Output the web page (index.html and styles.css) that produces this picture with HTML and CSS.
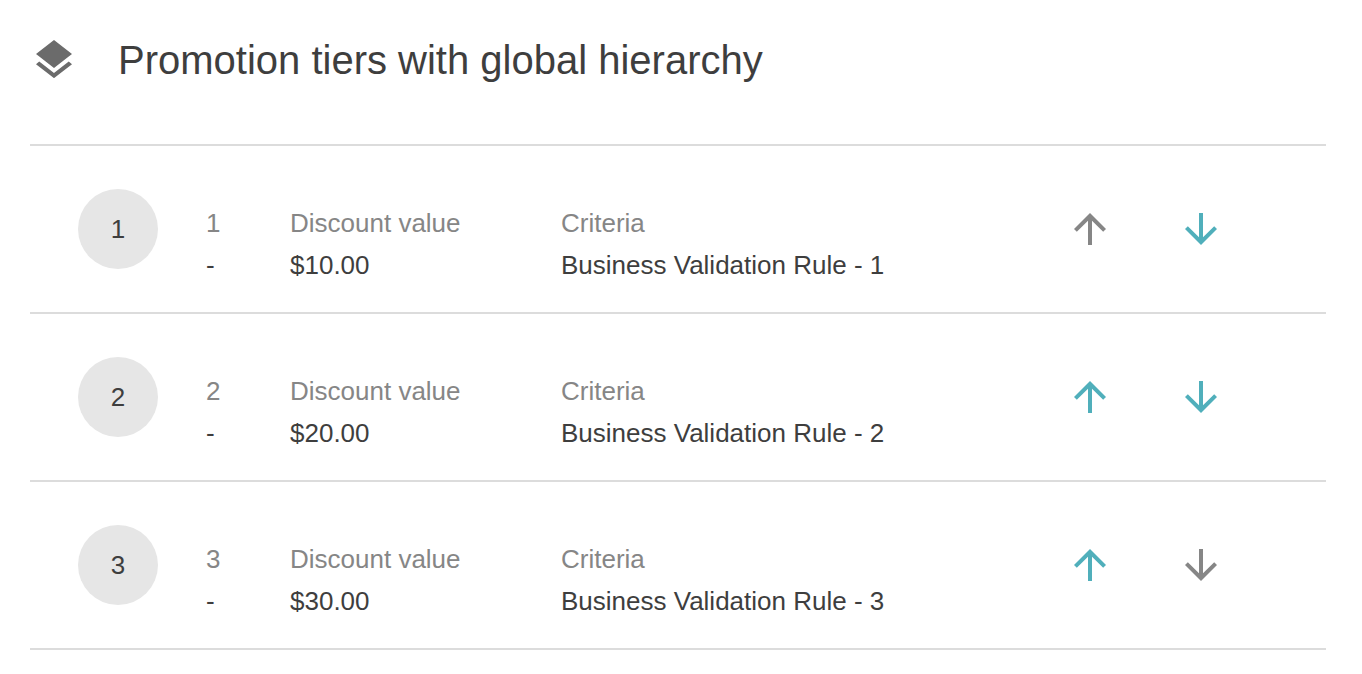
FILE: index.html
```html
<!DOCTYPE html>
<html lang="en">
<head>
    <meta charset="UTF-8">
    <meta name="viewport" content="width=device-width, initial-scale=1.0">
    <title>Promotion tiers</title>
    <link rel="stylesheet" href="styles.css">
</head>
<body>
    <svg class="icon-defs" aria-hidden="true">
        <symbol id="arrow-up" viewBox="4 4 16 16">
            <path d="M4 12l1.41 1.41L11 7.83V20h2V7.83l5.58 5.59L20 12l-8-8-8 8z"/>
        </symbol>
        <symbol id="arrow-down" viewBox="4 4 16 16">
            <path d="M20 12l-1.41-1.41L13 16.17V4h-2v12.17l-5.58-5.59L4 12l8 8 8-8z"/>
        </symbol>
    </svg>

    <main class="tiers">
        <header class="tiers-header">
            <svg class="layers-icon" viewBox="3 2 18 19" aria-hidden="true">
                <path d="M11.99 18.54l-7.37-5.73L3 14.07l9 7 9-7-1.63-1.27-7.38 5.74zM12 16l7.36-5.73L21 9l-9-7-9 7 1.63 1.27L12 16z"/>
            </svg>
            <h1>Promotion tiers with global hierarchy</h1>
        </header>

        <ul class="tier-list">
            <li class="tier">
                <div class="badge">1</div>
                <div class="field"><span class="label">1</span><span>-</span></div>
                <div class="field"><span class="label">Discount value</span><span>$10.00</span></div>
                <div class="field"><span class="label">Criteria</span><span>Business Validation Rule - 1</span></div>
                <div class="actions">
                    <button type="button" aria-label="Move up" disabled><svg><use href="#arrow-up"/></svg></button>
                    <button type="button" aria-label="Move down"><svg><use href="#arrow-down"/></svg></button>
                </div>
            </li>
            <li class="tier">
                <div class="badge">2</div>
                <div class="field"><span class="label">2</span><span>-</span></div>
                <div class="field"><span class="label">Discount value</span><span>$20.00</span></div>
                <div class="field"><span class="label">Criteria</span><span>Business Validation Rule - 2</span></div>
                <div class="actions">
                    <button type="button" aria-label="Move up"><svg><use href="#arrow-up"/></svg></button>
                    <button type="button" aria-label="Move down"><svg><use href="#arrow-down"/></svg></button>
                </div>
            </li>
            <li class="tier">
                <div class="badge">3</div>
                <div class="field"><span class="label">3</span><span>-</span></div>
                <div class="field"><span class="label">Discount value</span><span>$30.00</span></div>
                <div class="field"><span class="label">Criteria</span><span>Business Validation Rule - 3</span></div>
                <div class="actions">
                    <button type="button" aria-label="Move up"><svg><use href="#arrow-up"/></svg></button>
                    <button type="button" aria-label="Move down" disabled><svg><use href="#arrow-down"/></svg></button>
                </div>
            </li>
        </ul>
    </main>
</body>
</html>
```
FILE: styles.css
```css
* {
    box-sizing: border-box;
}

body {
    margin: 0;
    background: #ffffff;
    color: #3e3e3e;
    font-family: "Helvetica Neue", "Liberation Sans", Arial, sans-serif;
    font-size: 26px;
    line-height: 42px;
}

.icon-defs {
    display: none;
}

.tiers {
    padding: 0 36px 0 30px;
}

.tiers-header {
    display: flex;
    align-items: flex-start;
    gap: 46px;
    padding: 40px 6px 64px;
}

.layers-icon {
    width: 36px;
    height: 38px;
    fill: #6b6b6b;
}

h1 {
    margin: 0;
    font-size: 40px;
    font-weight: normal;
    line-height: 40px;
}

.tier-list {
    margin: 0;
    padding: 0;
    list-style: none;
    border-top: 2px solid #dcdcdc;
}

.tier {
    display: grid;
    grid-template-columns: 80px 36px 223px 1fr 143px;
    column-gap: 48px;
    align-items: start;
    padding: 43px 109px 26px 48px;
    border-bottom: 2px solid #dcdcdc;
}

.badge {
    display: flex;
    align-items: center;
    justify-content: center;
    width: 80px;
    height: 80px;
    border-radius: 50%;
    background: #e6e6e6;
}

.field {
    display: flex;
    flex-direction: column;
    padding-top: 13px;
}

.label {
    color: #868686;
}

.actions {
    display: flex;
    justify-content: space-between;
    padding-top: 24px;
}

button {
    width: 32px;
    height: 32px;
    padding: 0;
    border: none;
    background: none;
    color: #50afbb;
    cursor: pointer;
}

button:disabled {
    color: #868686;
    cursor: default;
}

button svg {
    display: block;
    width: 32px;
    height: 32px;
    fill: currentColor;
}
```
